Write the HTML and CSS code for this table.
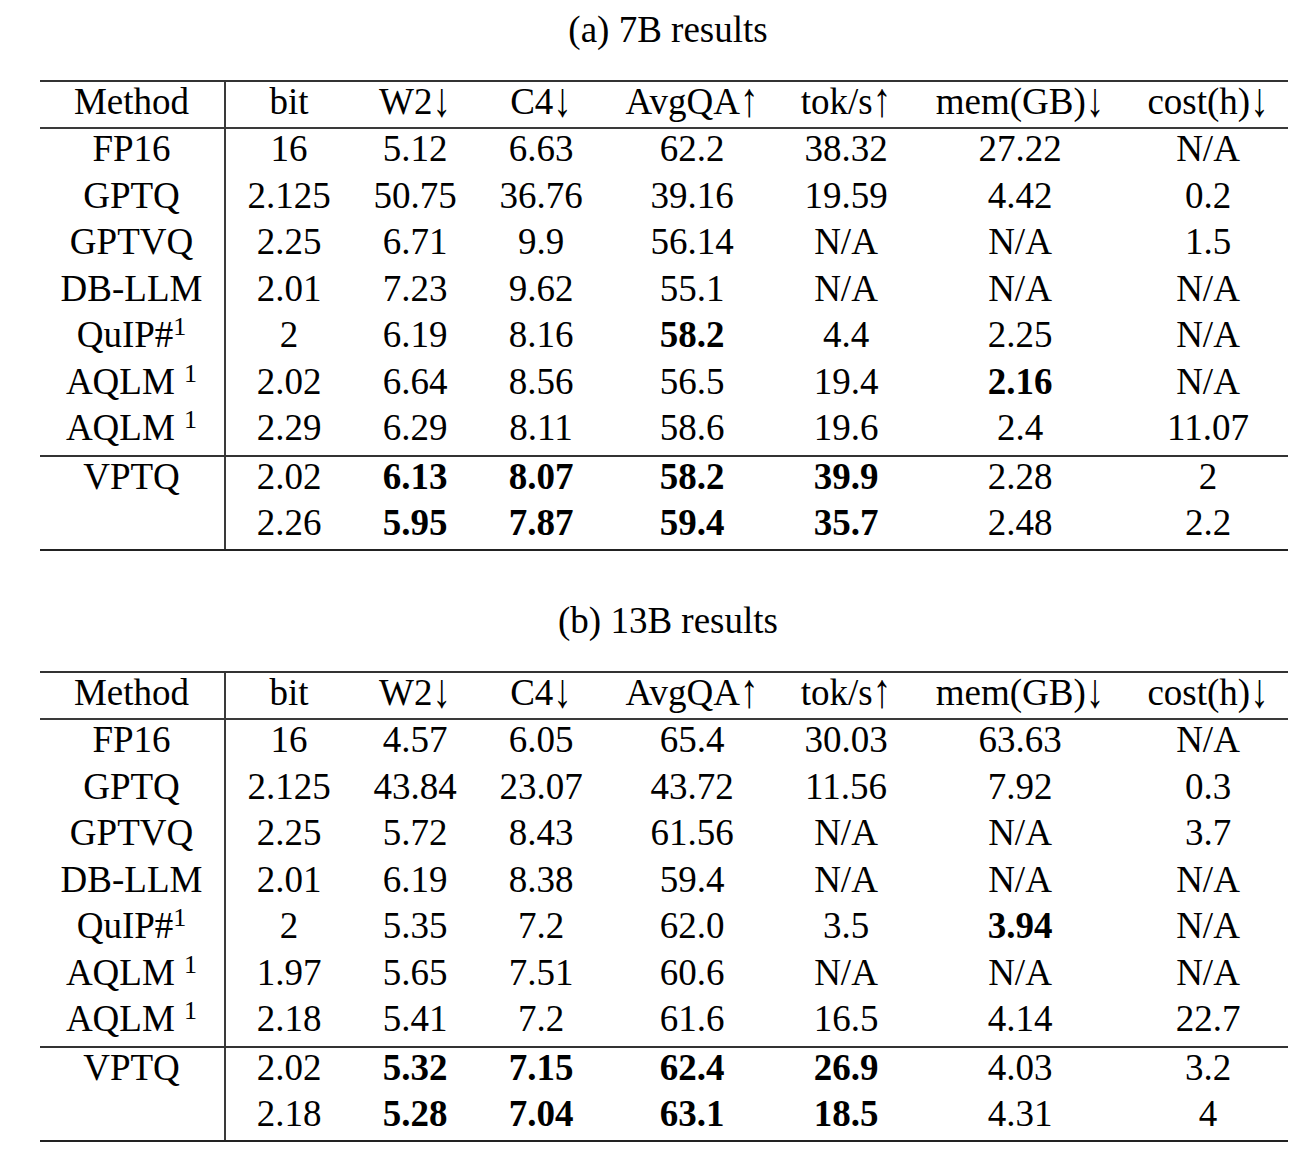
FILE: index.html
```html
<!DOCTYPE html>
<html lang="en">
<head>
<meta charset="utf-8">
<title>VPTQ results</title>
<link rel="stylesheet" href="styles.css">
</head>
<body>
<main class="page">
  <section class="subtable">
    <div class="caption">(a) 7B results</div>
    <div class="tbl">
      <div class="row head">
        <div class="c m">Method</div><div class="c">bit</div><div class="c">W2<span class="arr">↓</span></div><div class="c">C4<span class="arr">↓</span></div><div class="c">AvgQA<span class="arr up">↑</span></div><div class="c">tok/s<span class="arr up">↑</span></div><div class="c">mem(GB)<span class="arr">↓</span></div><div class="c">cost(h)<span class="arr">↓</span></div>
      </div>
      <div class="group">
        <div class="row"><div class="c m">FP16</div><div class="c">16</div><div class="c">5.12</div><div class="c">6.63</div><div class="c">62.2</div><div class="c">38.32</div><div class="c">27.22</div><div class="c">N/A</div></div>
        <div class="row"><div class="c m">GPTQ</div><div class="c">2.125</div><div class="c">50.75</div><div class="c">36.76</div><div class="c">39.16</div><div class="c">19.59</div><div class="c">4.42</div><div class="c">0.2</div></div>
        <div class="row"><div class="c m">GPTVQ</div><div class="c">2.25</div><div class="c">6.71</div><div class="c">9.9</div><div class="c">56.14</div><div class="c">N/A</div><div class="c">N/A</div><div class="c">1.5</div></div>
        <div class="row"><div class="c m">DB-LLM</div><div class="c">2.01</div><div class="c">7.23</div><div class="c">9.62</div><div class="c">55.1</div><div class="c">N/A</div><div class="c">N/A</div><div class="c">N/A</div></div>
        <div class="row"><div class="c m">QuIP#<sup class="fn">1</sup></div><div class="c">2</div><div class="c">6.19</div><div class="c">8.16</div><div class="c b">58.2</div><div class="c">4.4</div><div class="c">2.25</div><div class="c">N/A</div></div>
        <div class="row"><div class="c m">AQLM <sup class="fn">1</sup></div><div class="c">2.02</div><div class="c">6.64</div><div class="c">8.56</div><div class="c">56.5</div><div class="c">19.4</div><div class="c b">2.16</div><div class="c">N/A</div></div>
        <div class="row"><div class="c m">AQLM <sup class="fn">1</sup></div><div class="c">2.29</div><div class="c">6.29</div><div class="c">8.11</div><div class="c">58.6</div><div class="c">19.6</div><div class="c">2.4</div><div class="c">11.07</div></div>
      </div>
      <div class="group ours">
        <div class="row"><div class="c m">VPTQ</div><div class="c">2.02</div><div class="c b">6.13</div><div class="c b">8.07</div><div class="c b">58.2</div><div class="c b">39.9</div><div class="c">2.28</div><div class="c">2</div></div>
        <div class="row"><div class="c m"></div><div class="c">2.26</div><div class="c b">5.95</div><div class="c b">7.87</div><div class="c b">59.4</div><div class="c b">35.7</div><div class="c">2.48</div><div class="c">2.2</div></div>
      </div>
    </div>
  </section>

  <section class="subtable second">
    <div class="caption">(b) 13B results</div>
    <div class="tbl">
      <div class="row head">
        <div class="c m">Method</div><div class="c">bit</div><div class="c">W2<span class="arr">↓</span></div><div class="c">C4<span class="arr">↓</span></div><div class="c">AvgQA<span class="arr up">↑</span></div><div class="c">tok/s<span class="arr up">↑</span></div><div class="c">mem(GB)<span class="arr">↓</span></div><div class="c">cost(h)<span class="arr">↓</span></div>
      </div>
      <div class="group">
        <div class="row"><div class="c m">FP16</div><div class="c">16</div><div class="c">4.57</div><div class="c">6.05</div><div class="c">65.4</div><div class="c">30.03</div><div class="c">63.63</div><div class="c">N/A</div></div>
        <div class="row"><div class="c m">GPTQ</div><div class="c">2.125</div><div class="c">43.84</div><div class="c">23.07</div><div class="c">43.72</div><div class="c">11.56</div><div class="c">7.92</div><div class="c">0.3</div></div>
        <div class="row"><div class="c m">GPTVQ</div><div class="c">2.25</div><div class="c">5.72</div><div class="c">8.43</div><div class="c">61.56</div><div class="c">N/A</div><div class="c">N/A</div><div class="c">3.7</div></div>
        <div class="row"><div class="c m">DB-LLM</div><div class="c">2.01</div><div class="c">6.19</div><div class="c">8.38</div><div class="c">59.4</div><div class="c">N/A</div><div class="c">N/A</div><div class="c">N/A</div></div>
        <div class="row"><div class="c m">QuIP#<sup class="fn">1</sup></div><div class="c">2</div><div class="c">5.35</div><div class="c">7.2</div><div class="c">62.0</div><div class="c">3.5</div><div class="c b">3.94</div><div class="c">N/A</div></div>
        <div class="row"><div class="c m">AQLM <sup class="fn">1</sup></div><div class="c">1.97</div><div class="c">5.65</div><div class="c">7.51</div><div class="c">60.6</div><div class="c">N/A</div><div class="c">N/A</div><div class="c">N/A</div></div>
        <div class="row"><div class="c m">AQLM <sup class="fn">1</sup></div><div class="c">2.18</div><div class="c">5.41</div><div class="c">7.2</div><div class="c">61.6</div><div class="c">16.5</div><div class="c">4.14</div><div class="c">22.7</div></div>
      </div>
      <div class="group ours">
        <div class="row"><div class="c m">VPTQ</div><div class="c">2.02</div><div class="c b">5.32</div><div class="c b">7.15</div><div class="c b">62.4</div><div class="c b">26.9</div><div class="c">4.03</div><div class="c">3.2</div></div>
        <div class="row"><div class="c m"></div><div class="c">2.18</div><div class="c b">5.28</div><div class="c b">7.04</div><div class="c b">63.1</div><div class="c b">18.5</div><div class="c">4.31</div><div class="c">4</div></div>
      </div>
    </div>
  </section>
</main>
</body>
</html>
```

FILE: styles.css
```css
html, body {
  margin: 0;
  padding: 0;
  background: #ffffff;
}

body {
  font-family: "Liberation Serif", "Times New Roman", serif;
  color: #000000;
  font-size: 37px;
}

.page {
  width: 1248px;
  margin-left: 40px;
  display: flex;
  flex-direction: column;
  gap: 40px;
}

.subtable {
  display: flex;
  flex-direction: column;
}

.caption {
  height: 80px;
  box-sizing: border-box;
  padding-top: 11px;
  padding-left: 8px;
  line-height: 37px;
  text-align: center;
}

.tbl {
  border-top: 2px solid #333333;
  border-bottom: 2px solid #222222;
}

.row {
  display: grid;
  grid-template-columns: 186px 126px 126px 126px 176px 132px 216px 160px;
  height: 46.57px;
  line-height: 37px;
}

.row.head {
  height: 45px;
  border-bottom: 2px solid #3a3a3a;
}

.group.ours {
  border-top: 2px solid #333333;
}

.group.ours .row {
  height: 46px;
}

.c {
  text-align: center;
  white-space: nowrap;
  padding-top: 1px;
}

.c.m {
  box-sizing: border-box;
  border-right: 2px solid #3a3a3a;
  padding-right: 1px;
}

.arr {
  display: inline-block;
  transform: scaleY(1.3) translateY(3px);
  transform-origin: center bottom;
}

.arr.up {
  transform: scaleY(1.3) translateY(3px);
}

.b {
  font-weight: bold;
}

.fn {
  font-size: 26px;
  line-height: 0;
  vertical-align: 12px;
}
```
